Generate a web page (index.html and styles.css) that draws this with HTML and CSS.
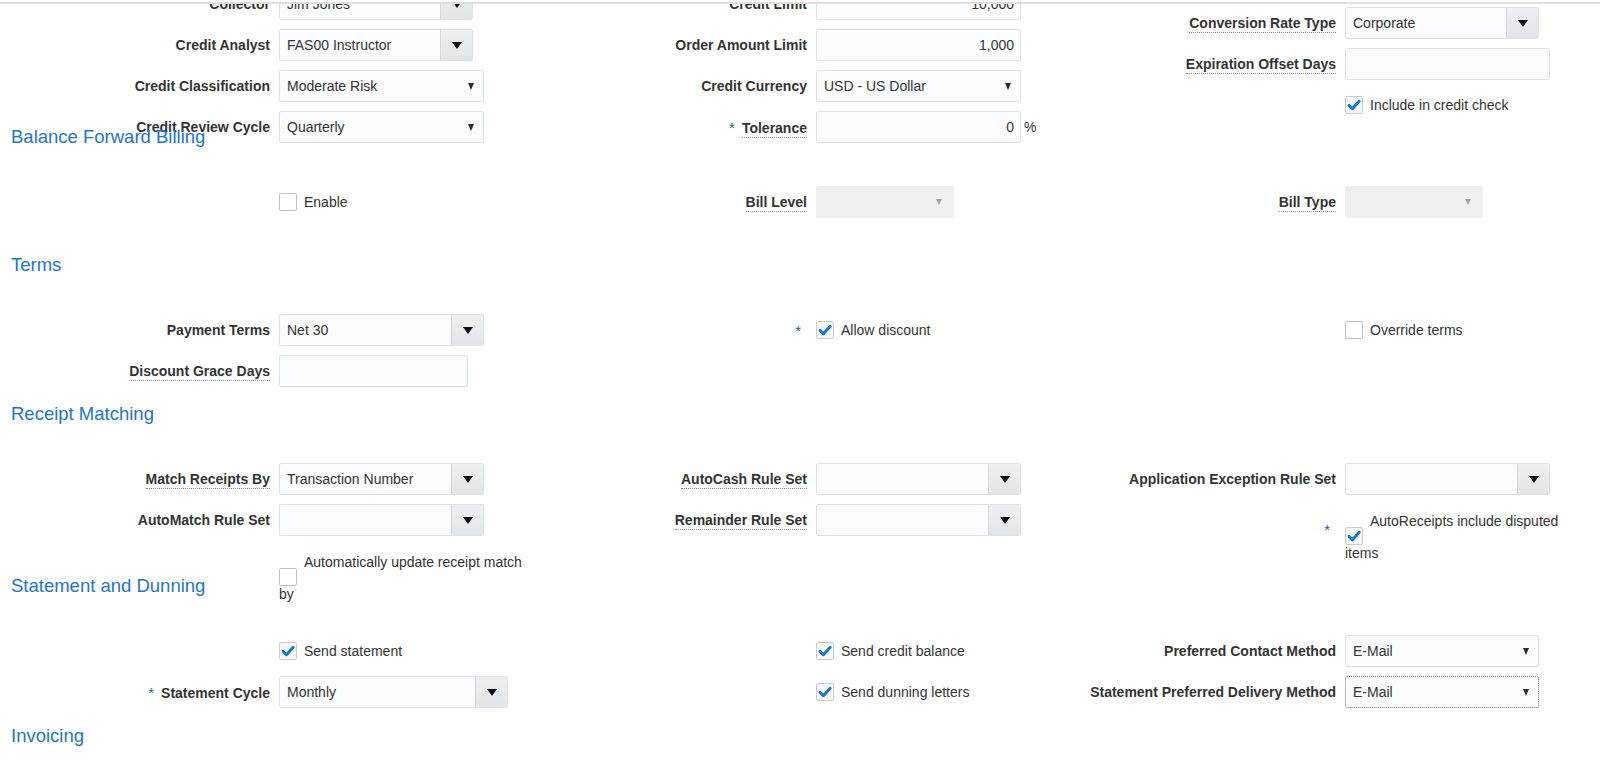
FILE: index.html
```html
<!DOCTYPE html>
<html lang="en">
<head>
<meta charset="utf-8">
<title>Customer Account Profile</title>
<link rel="stylesheet" href="styles.css">
</head>
<body>
<div class="viewport">

  <!-- Credit and collections (scrolled, partly hidden) -->
  <div class="grid grid--first">
    <div class="col">
      <div class="row"><span class="lbl">Collector</span>
        <div class="field combo w-m"><span class="val">Jim Jones</span><span class="btn"><i class="tri"></i></span></div></div>
      <div class="row"><span class="lbl">Credit Analyst</span>
        <div class="field combo w-m"><span class="val">FAS00 Instructor</span><span class="btn"><i class="tri"></i></span></div></div>
      <div class="row"><span class="lbl">Credit Classification</span>
        <div class="field select w-l"><span class="val">Moderate Risk</span><i class="arrow"></i></div></div>
      <div class="row"><span class="lbl">Credit Review Cycle</span>
        <div class="field select w-l"><span class="val">Quarterly</span><i class="arrow"></i></div></div>
    </div>
    <div class="col">
      <div class="row"><span class="lbl">Credit Limit</span>
        <div class="field num w-l"><span class="val">10,000</span></div></div>
      <div class="row"><span class="lbl">Order Amount Limit</span>
        <div class="field num w-l"><span class="val">1,000</span></div></div>
      <div class="row"><span class="lbl">Credit Currency</span>
        <div class="field select w-l"><span class="val">USD - US Dollar</span><i class="arrow"></i></div></div>
      <div class="row"><span class="lbl"><span class="req">*</span><span class="hint">Tolerance</span></span>
        <div class="unit"><div class="field num w-l"><span class="val">0</span></div><span class="pct">%</span></div></div>
    </div>
    <div class="col col--offset">
      <div class="row"><span class="lbl"><span class="hint">Conversion Rate Type</span></span>
        <div class="field combo w-m"><span class="val">Corporate</span><span class="btn"><i class="tri"></i></span></div></div>
      <div class="row"><span class="lbl"><span class="hint">Expiration Offset Days</span></span>
        <div class="field w-l"></div></div>
      <div class="row"><span class="lbl"></span>
        <label class="check"><span class="cb cb--on"><svg viewBox="0 0 16 16"><path d="M3 8.4l3.4 3.4L13.2 4.3"/></svg></span>Include in credit check</label></div>
    </div>
  </div>

  <h2 class="title title--bfb">Balance Forward Billing</h2>
  <div class="grid">
    <div class="col">
      <div class="row"><span class="lbl"></span>
        <label class="check"><span class="cb"></span>Enable</label></div>
    </div>
    <div class="col">
      <div class="row"><span class="lbl"><span class="hint">Bill Level</span></span>
        <div class="field select disabled w-s"><span class="val"></span><i class="arrow"></i></div></div>
    </div>
    <div class="col">
      <div class="row"><span class="lbl"><span class="hint">Bill Type</span></span>
        <div class="field select disabled w-s"><span class="val"></span><i class="arrow"></i></div></div>
    </div>
  </div>

  <h2 class="title title--terms">Terms</h2>
  <div class="grid">
    <div class="col">
      <div class="row"><span class="lbl">Payment Terms</span>
        <div class="field combo w-l"><span class="val">Net 30</span><span class="btn"><i class="tri"></i></span></div></div>
      <div class="row"><span class="lbl"><span class="hint">Discount Grace Days</span></span>
        <div class="field w-grace"></div></div>
    </div>
    <div class="col">
      <div class="row"><span class="lbl lbl--req"><span class="req">*</span></span>
        <label class="check"><span class="cb cb--on"><svg viewBox="0 0 16 16"><path d="M3 8.4l3.4 3.4L13.2 4.3"/></svg></span>Allow discount</label></div>
    </div>
    <div class="col">
      <div class="row"><span class="lbl"></span>
        <label class="check"><span class="cb"></span>Override terms</label></div>
    </div>
  </div>

  <h2 class="title title--receipt">Receipt Matching</h2>
  <div class="grid">
    <div class="col">
      <div class="row"><span class="lbl"><span class="hint">Match Receipts By</span></span>
        <div class="field combo w-l"><span class="val">Transaction Number</span><span class="btn"><i class="tri"></i></span></div></div>
      <div class="row"><span class="lbl">AutoMatch Rule Set</span>
        <div class="field combo w-l"><span class="val"></span><span class="btn"><i class="tri"></i></span></div></div>
      <div class="row row--wrap"><span class="lbl"></span>
        <label class="cbwrap cbwrap--update"><span class="cb"></span>Automatically update receipt match by</label></div>
    </div>
    <div class="col">
      <div class="row"><span class="lbl"><span class="hint">AutoCash Rule Set</span></span>
        <div class="field combo w-l"><span class="val"></span><span class="btn"><i class="tri"></i></span></div></div>
      <div class="row"><span class="lbl"><span class="hint">Remainder Rule Set</span></span>
        <div class="field combo w-l"><span class="val"></span><span class="btn"><i class="tri"></i></span></div></div>
    </div>
    <div class="col">
      <div class="row"><span class="lbl">Application Exception Rule Set</span>
        <div class="field combo w-l"><span class="val"></span><span class="btn"><i class="tri"></i></span></div></div>
      <div class="row row--wrap"><span class="lbl lbl--req lbl--wrapreq"><span class="req">*</span></span>
        <label class="cbwrap cbwrap--auto"><span class="cb cb--on"><svg viewBox="0 0 16 16"><path d="M3 8.4l3.4 3.4L13.2 4.3"/></svg></span>AutoReceipts include disputed items</label></div>
    </div>
  </div>

  <h2 class="title title--statement">Statement and Dunning</h2>
  <div class="grid">
    <div class="col">
      <div class="row"><span class="lbl"></span>
        <label class="check"><span class="cb cb--on"><svg viewBox="0 0 16 16"><path d="M3 8.4l3.4 3.4L13.2 4.3"/></svg></span>Send statement</label></div>
      <div class="row"><span class="lbl"><span class="req">*</span>Statement Cycle</span>
        <div class="field combo w-xl"><span class="val">Monthly</span><span class="btn"><i class="tri"></i></span></div></div>
    </div>
    <div class="col">
      <div class="row"><span class="lbl"></span>
        <label class="check"><span class="cb cb--on"><svg viewBox="0 0 16 16"><path d="M3 8.4l3.4 3.4L13.2 4.3"/></svg></span>Send credit balance</label></div>
      <div class="row"><span class="lbl"></span>
        <label class="check"><span class="cb cb--on"><svg viewBox="0 0 16 16"><path d="M3 8.4l3.4 3.4L13.2 4.3"/></svg></span>Send dunning letters</label></div>
    </div>
    <div class="col">
      <div class="row"><span class="lbl">Preferred Contact Method</span>
        <div class="field select w-m"><span class="val">E-Mail</span><i class="arrow"></i></div></div>
      <div class="row"><span class="lbl">Statement Preferred Delivery Method</span>
        <div class="field select focus w-m"><span class="val">E-Mail</span><i class="arrow"></i></div></div>
    </div>
  </div>

  <h2 class="title title--invoicing">Invoicing</h2>

</div>
</body>
</html>
```

FILE: styles.css
```css
html, body {
  margin: 0;
  padding: 0;
  background: #ffffff;
}

body {
  font-family: "Liberation Sans", Arial, sans-serif;
  color: #333333;
  font-size: 14px;
}

.viewport {
  margin-top: 2px;
  border-top: 2px solid #e0e0e0;
  height: 770px;
  overflow: hidden;
}

/* three-column form grid */
.grid {
  display: grid;
  grid-template-columns: 537px 529px 1fr;
  align-items: start;
}

.grid--first {
  margin-top: -16px;
}

.col {
  display: flex;
  flex-direction: column;
  gap: 9px;
}

.col--offset {
  padding-top: 19px;
}

.row {
  display: grid;
  grid-template-columns: 270px auto;
  column-gap: 9px;
  align-items: center;
  justify-content: start;
  height: 32px;
}

.grid > .col:first-child .row {
  grid-template-columns: 270px auto;
}

.row--wrap {
  height: auto;
  align-items: start;
}

.lbl {
  text-align: right;
  font-weight: bold;
  font-size: 14px;
  color: #333333;
  white-space: nowrap;
}

.lbl--req {
  padding-right: 6px;
}

.lbl--wrapreq {
  padding-top: 18px;
  line-height: 16px;
}

.hint {
  border-bottom: 1px dotted #8c8c8c;
  padding-bottom: 1px;
}

.req {
  color: #2b61a6;
  font-weight: normal;
  font-size: 15px;
  margin-right: 7px;
}

.lbl--req .req {
  margin-right: 0;
}

/* section titles */
.title {
  margin: 0 0 38px 0;
  padding-left: 11px;
  font-size: 18.5px;
  line-height: 22px;
  font-weight: normal;
  color: #2575c7;
  position: relative;
}

.title--bfb { margin-top: -17px; }
.title--terms { margin-top: 36px; }
.title--receipt { margin-top: 16px; }
.title--statement { margin-top: -27px; }
.title--invoicing { margin-top: 17px; }

/* fields */
.field {
  box-sizing: border-box;
  height: 32px;
  border: 1px solid #dde2e6;
  border-radius: 2px;
  background: #fbfcfd;
  display: flex;
  align-items: center;
  padding-left: 7px;
  font-size: 14px;
  color: #333333;
  overflow: hidden;
}

.w-s { width: 138px; }
.w-grace { width: 189px; }
.w-m { width: 194px; }
.w-l { width: 205px; }
.w-xl { width: 229px; }

.val {
  white-space: nowrap;
}

.num {
  justify-content: flex-end;
  padding-right: 6px;
}

.unit {
  display: flex;
  align-items: center;
}

.pct {
  margin-left: 3px;
  font-size: 14px;
  color: #333333;
}

.select .arrow {
  margin-left: auto;
  margin-right: 9px;
  width: 0;
  height: 0;
  border-left: 3.5px solid transparent;
  border-right: 3.5px solid transparent;
  border-top: 7px solid #2d2d2d;
}

.disabled {
  background: #efefef;
  border-color: #efefef;
}

.disabled .arrow {
  border-top-color: #a3a3a3;
  margin-right: 11px;
  border-left-width: 3px;
  border-right-width: 3px;
  border-top-width: 6px;
}

.focus {
  border: 1px dotted #6f6f6f;
}

.combo .btn {
  margin-left: auto;
  box-sizing: border-box;
  width: 32px;
  height: 100%;
  border-left: 1px solid #d3d8db;
  background: linear-gradient(#eef0f2, #e2e5e7);
  display: flex;
  align-items: center;
  justify-content: center;
  flex-shrink: 0;
}

.tri {
  display: block;
  width: 0;
  height: 0;
  border-left: 5px solid transparent;
  border-right: 5px solid transparent;
  border-top: 7px solid #111111;
}

/* checkboxes */
.check {
  display: flex;
  align-items: center;
  gap: 7px;
  font-size: 14px;
  color: #333333;
  white-space: nowrap;
}

.cb {
  box-sizing: border-box;
  display: inline-block;
  width: 18px;
  height: 18px;
  border: 1px solid #bcc3c8;
  border-radius: 2px;
  background: #ffffff;
  overflow: hidden;
  flex-shrink: 0;
}

.cb--on {
  background: #f5f7f9;
  border-color: #c6ccd1;
}

.cb svg {
  display: block;
  width: 16px;
  height: 16px;
}

.cb svg path {
  fill: none;
  stroke: #1a74cb;
  stroke-width: 2.9;
  stroke-linecap: round;
  stroke-linejoin: round;
}

.cbwrap {
  display: block;
  padding-top: 9px;
  line-height: 16px;
  font-size: 14px;
  color: #333333;
}

.cbwrap .cb {
  vertical-align: -19px;
  margin-right: 7px;
}

.cbwrap--update { width: 248px; }
.cbwrap--auto { width: 225px; }
```
